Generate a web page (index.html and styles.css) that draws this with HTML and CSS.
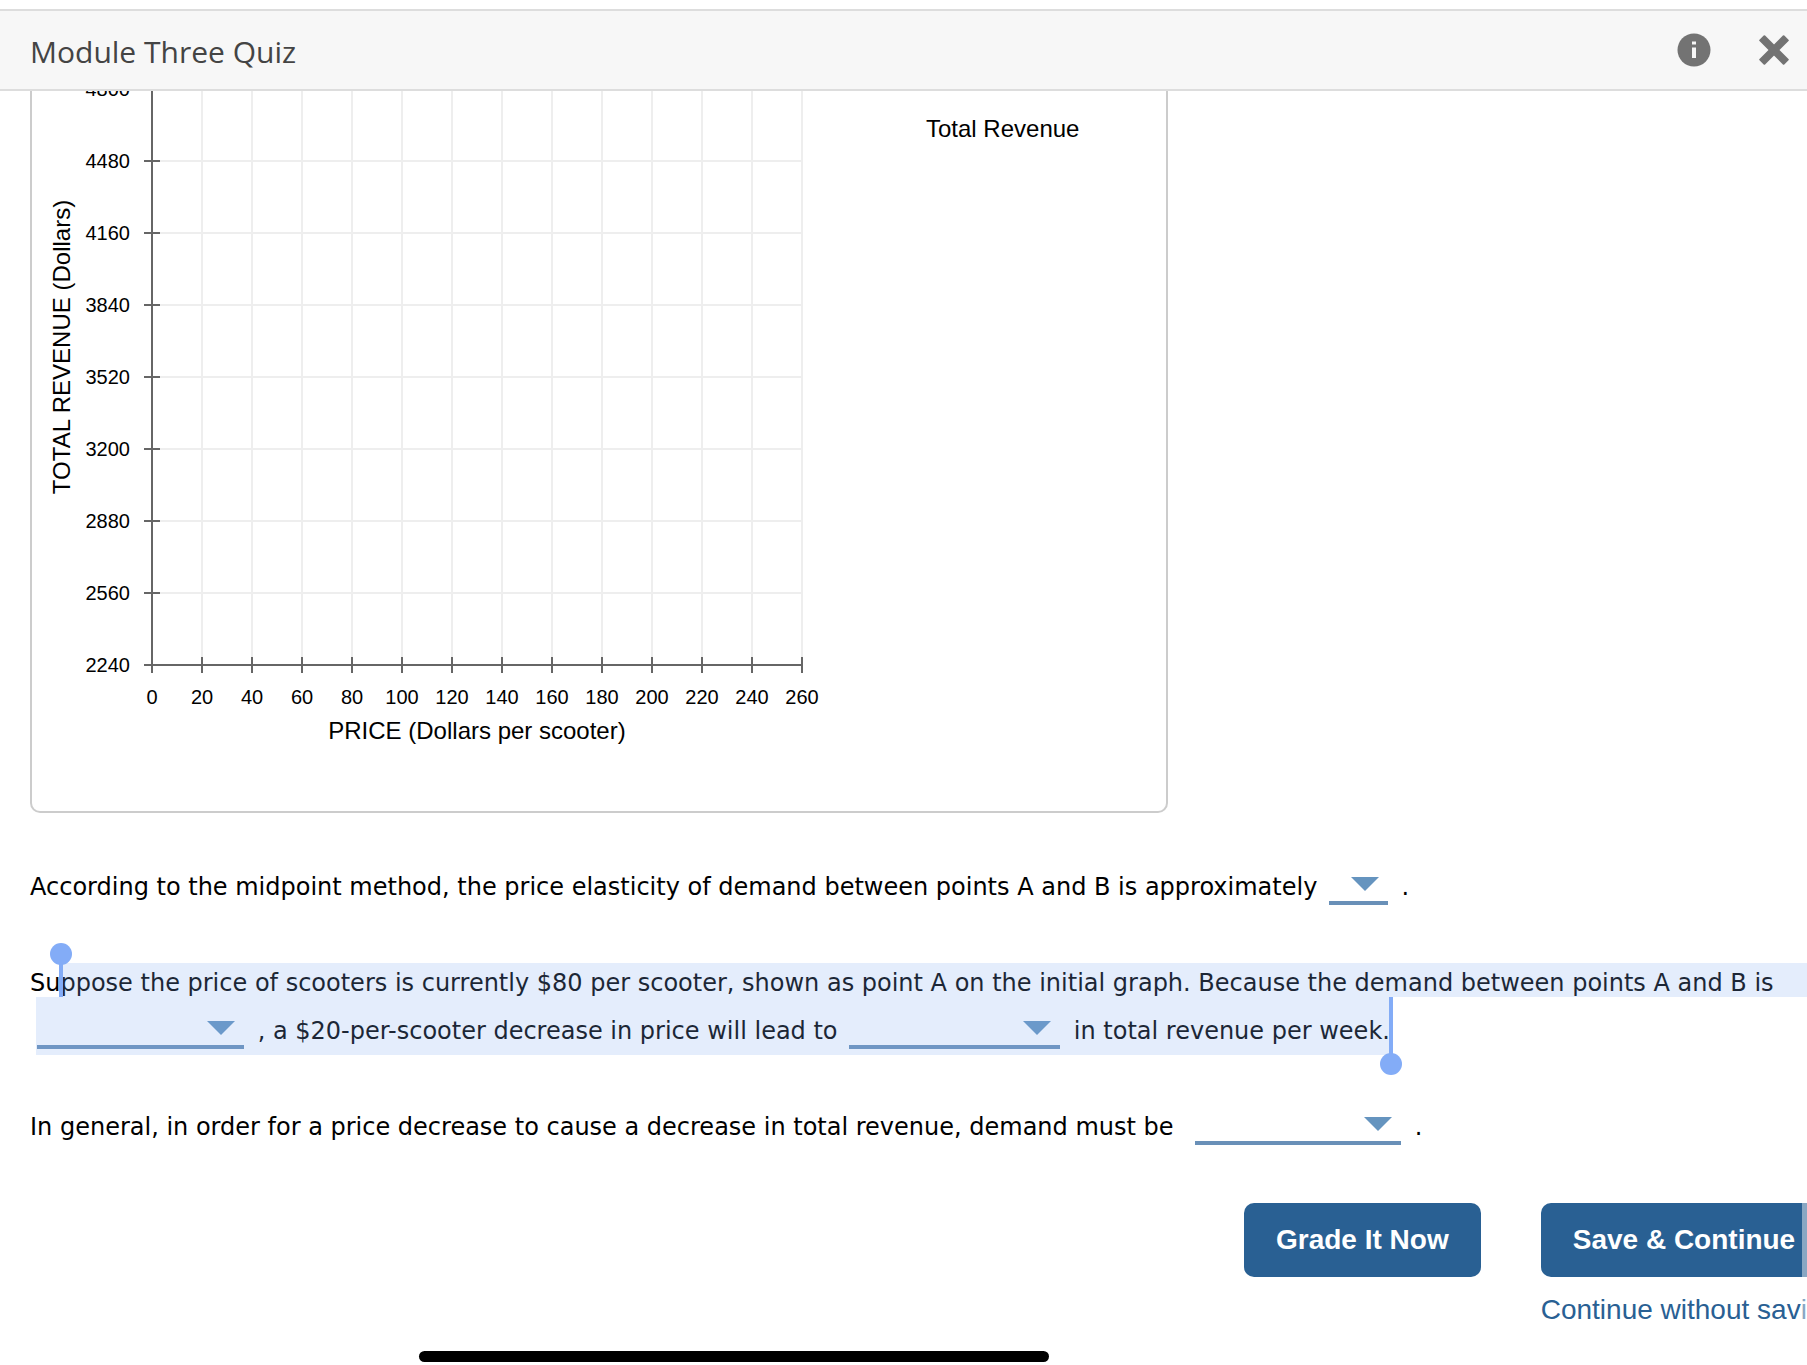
FILE: index.html
```html
<!DOCTYPE html>
<html lang="en">
<head>
<meta charset="utf-8">
<meta name="viewport" content="width=device-width, initial-scale=1">
<title>Module Three Quiz</title>
<link rel="stylesheet" href="styles.css">
</head>
<body>
<header class="topbar">
  <h1 class="topbar-title">Module Three Quiz</h1>
  <div class="topbar-tools">
    <button class="icon-button" type="button" aria-label="Information">
      <svg width="34" height="34" viewBox="0 0 34 34" aria-hidden="true">
        <circle cx="17" cy="17" r="16.5" fill="#737373"/>
        <path d="M15 8.500h4v3h-4zM15 14.500h4V25h-4z" fill="#f7f7f7"/>
      </svg>
    </button>
    <button class="icon-button" type="button" aria-label="Close">
      <svg width="30" height="30" viewBox="0 0 30 30" aria-hidden="true">
        <path d="M5.400 1.200L28.800 24.600L24.600 28.800L1.200 5.400ZM24.600 1.200L28.800 5.400L5.400 28.800L1.200 24.600Z" fill="#737373" stroke="#737373" stroke-width="2" stroke-linejoin="round"/>
      </svg>
    </button>
  </div>
</header>

<main class="content">
  <section class="graph-card" aria-label="Total revenue graph">
    <svg class="graph" viewBox="0 0 1134 720" role="img" aria-label="Empty grid of total revenue against price">
      <g transform="translate(120 574)">
        <path class="grid" d="M50 0V-580M100 0V-580M150 0V-580M200 0V-580M250 0V-580M300 0V-580M350 0V-580M400 0V-580M450 0V-580M500 0V-580M550 0V-580M600 0V-580M650 0V-580"/>
        <path class="grid" d="M0 -72H650M0 -144H650M0 -216H650M0 -288H650M0 -360H650M0 -432H650M0 -504H650"/>
        <path class="axis" d="M0 8V-580M-8 0H651M-8 -72H8M-8 -144H8M-8 -216H8M-8 -288H8M-8 -360H8M-8 -432H8M-8 -504H8"/>
        <path class="axis" d="M50 -8V8M100 -8V8M150 -8V8M200 -8V8M250 -8V8M300 -8V8M350 -8V8M400 -8V8M450 -8V8M500 -8V8M550 -8V8M600 -8V8M650 -8V8"/>
        <g class="tick tick-y">
          <text x="-22" y="7">2240</text>
          <text x="-22" y="-65">2560</text>
          <text x="-22" y="-137">2880</text>
          <text x="-22" y="-209">3200</text>
          <text x="-22" y="-281">3520</text>
          <text x="-22" y="-353">3840</text>
          <text x="-22" y="-425">4160</text>
          <text x="-22" y="-497">4480</text>
          <text x="-22" y="-569">4800</text>
        </g>
        <g class="tick tick-x">
          <text x="0" y="39">0</text>
          <text x="50" y="39">20</text>
          <text x="100" y="39">40</text>
          <text x="150" y="39">60</text>
          <text x="200" y="39">80</text>
          <text x="250" y="39">100</text>
          <text x="300" y="39">120</text>
          <text x="350" y="39">140</text>
          <text x="400" y="39">160</text>
          <text x="450" y="39">180</text>
          <text x="500" y="39">200</text>
          <text x="550" y="39">220</text>
          <text x="600" y="39">240</text>
          <text x="650" y="39">260</text>
        </g>
        <text class="axis-title" x="325" y="74">PRICE (Dollars per scooter)</text>
        <text class="axis-title" transform="translate(-82 -318) rotate(-90)">TOTAL REVENUE (Dollars)</text>
      </g>
      <text class="legend" x="894" y="46">Total Revenue</text>
    </svg>
  </section>

  <form class="question">
    <p>According to the midpoint method, the price elasticity of demand between points A and B is approximately <select class="blank blank-short" aria-label="Price elasticity of demand"><option></option></select> .</p>
    <p>
      <span class="line">Su<span class="handle handle-start"></span>ppose the price of scooters is currently $80 per scooter, shown as point A on the initial graph. Because the demand between points A and B is<span class="shade shade-first"></span></span>
      <span class="line line-last"><select class="blank blank-lead" aria-label="Type of demand between A and B"><option></option></select> , a $20-per-scooter decrease in price will lead to <select class="blank" aria-label="Change in total revenue"><option></option></select> in total revenue per week.<span class="handle handle-end"></span><span class="shade shade-last"></span></span>
    </p>
    <p>In general, in order for a price decrease to cause a decrease in total revenue, demand must be <select class="blank blank-gap" aria-label="What demand must be"><option></option></select> .</p>

    <div class="actions">
      <button class="button" type="button">Grade It Now</button>
      <div class="save">
        <button class="button" type="submit">Save &amp; Continue</button>
        <a class="skip" href="#">Continue without saving</a>
      </div>
    </div>
  </form>
</main>
<div class="home-bar"></div>
</body>
</html>
```
FILE: styles.css
```css
* {
  box-sizing: border-box;
}

body {
  margin: 0;
  min-height: 100vh;
  padding-top: 9px;
  position: relative;
  overflow: hidden;
  background: #fff;
  color: #000;
  font-family: Verdana, "DejaVu Sans", sans-serif;
  font-size: 24px;
  line-height: 48px;
}

.topbar {
  display: flex;
  align-items: center;
  justify-content: space-between;
  height: 82px;
  padding: 0 18px 0 30px;
  border-top: 2px solid #ddd;
  border-bottom: 2px solid #ddd;
  background: #f7f7f7;
}

.topbar-title {
  margin: 0;
  padding-top: 4px;
  color: #444;
  font: 400 30px/40px "Open Sans", sans-serif;
}

.topbar-tools {
  display: flex;
  align-items: center;
  gap: 48px;
}

.icon-button {
  display: flex;
  padding: 0;
  border: 0;
  background: none;
}

.content {
  padding-left: 30px;
}

.graph-card {
  max-width: 1138px;
  border: 2px solid #ccc;
  border-top: 0;
  border-radius: 0 0 10px 10px;
  overflow: hidden;
}

.graph {
  display: block;
  width: 100%;
  font-family: Arial, "Liberation Sans", sans-serif;
}

.grid {
  fill: none;
  stroke: #eee;
  stroke-width: 2;
}

.axis {
  fill: none;
  stroke: #666;
  stroke-width: 2;
}

.tick {
  font-size: 20px;
}

.tick-y {
  text-anchor: end;
}

.tick-x,
.axis-title {
  text-anchor: middle;
}

.axis-title,
.legend {
  font-size: 24px;
}

.question {
  padding-top: 50px;
}

.question p {
  margin: 0 0 48px;
}

.line {
  display: block;
  position: relative;
  white-space: nowrap;
}

.line-last {
  width: max-content;
}

.blank {
  appearance: none;
  width: 211px;
  height: 36px;
  margin: 0 6px 6px 4px;
  padding: 0;
  border: 0;
  border-bottom: 4px solid #6990b8;
  border-radius: 0;
  background: url("data:image/svg+xml,%3Csvg xmlns='http://www.w3.org/2000/svg' width='28' height='14'%3E%3Cpath d='M0 0h28L14 14z' fill='%236594bf'/%3E%3C/svg%3E") no-repeat right 9px top 8px;
  font: inherit;
  vertical-align: bottom;
}

.blank-short {
  width: 59px;
}

.blank-lead {
  width: 207px;
  margin-left: 7px;
}

.blank-gap {
  width: 206px;
  margin-left: 14px;
}

.shade {
  position: absolute;
  right: 0;
  background: rgba(130, 172, 242, 0.22);
  pointer-events: none;
}

.shade-first {
  left: 32px;
  top: 4px;
  height: 34px;
}

.shade-last {
  left: 6px;
  top: -10px;
  height: 58px;
}

.handle {
  display: inline-block;
  position: relative;
  width: 0;
}

.handle::before,
.handle::after {
  content: "";
  position: absolute;
  background: #83acf7;
}

.handle::before {
  left: -1px;
  width: 4px;
}

.handle::after {
  left: -10px;
  width: 22px;
  height: 22px;
  border-radius: 50%;
}

.handle-start::before {
  bottom: -6px;
  height: 34px;
}

.handle-start::after {
  bottom: 26px;
}

.handle-end::before {
  bottom: -16px;
  height: 58px;
}

.handle-end::after {
  bottom: -36px;
}

.actions {
  display: flex;
  justify-content: flex-end;
  align-items: flex-start;
  gap: 60px;
  margin: 52px -31px 0 0;
  font-family: Helvetica, Arial, "Liberation Sans", sans-serif;
  position: relative;
}

/* translucent scroll track at the right edge of the action area */
.actions::after {
  content: "";
  position: absolute;
  top: 0;
  bottom: 0;
  right: 31px;
  width: 5px;
  background: rgba(255, 255, 255, 0.45);
}

.save {
  display: flex;
  flex-direction: column;
  align-items: flex-start;
  gap: 9px;
}

.button {
  height: 74px;
  padding: 0 32px;
  border: 0;
  border-radius: 10px;
  background: #296093;
  color: #fff;
  font: 700 28px/32px Helvetica, Arial, "Liberation Sans", sans-serif;
  white-space: nowrap;
}

.skip {
  color: #296093;
  font-size: 28px;
  text-decoration: none;
  white-space: nowrap;
}

.home-bar {
  position: absolute;
  left: 419px;
  bottom: 3px;
  width: 630px;
  height: 11px;
  border-radius: 6px;
  background: #000;
}
```
